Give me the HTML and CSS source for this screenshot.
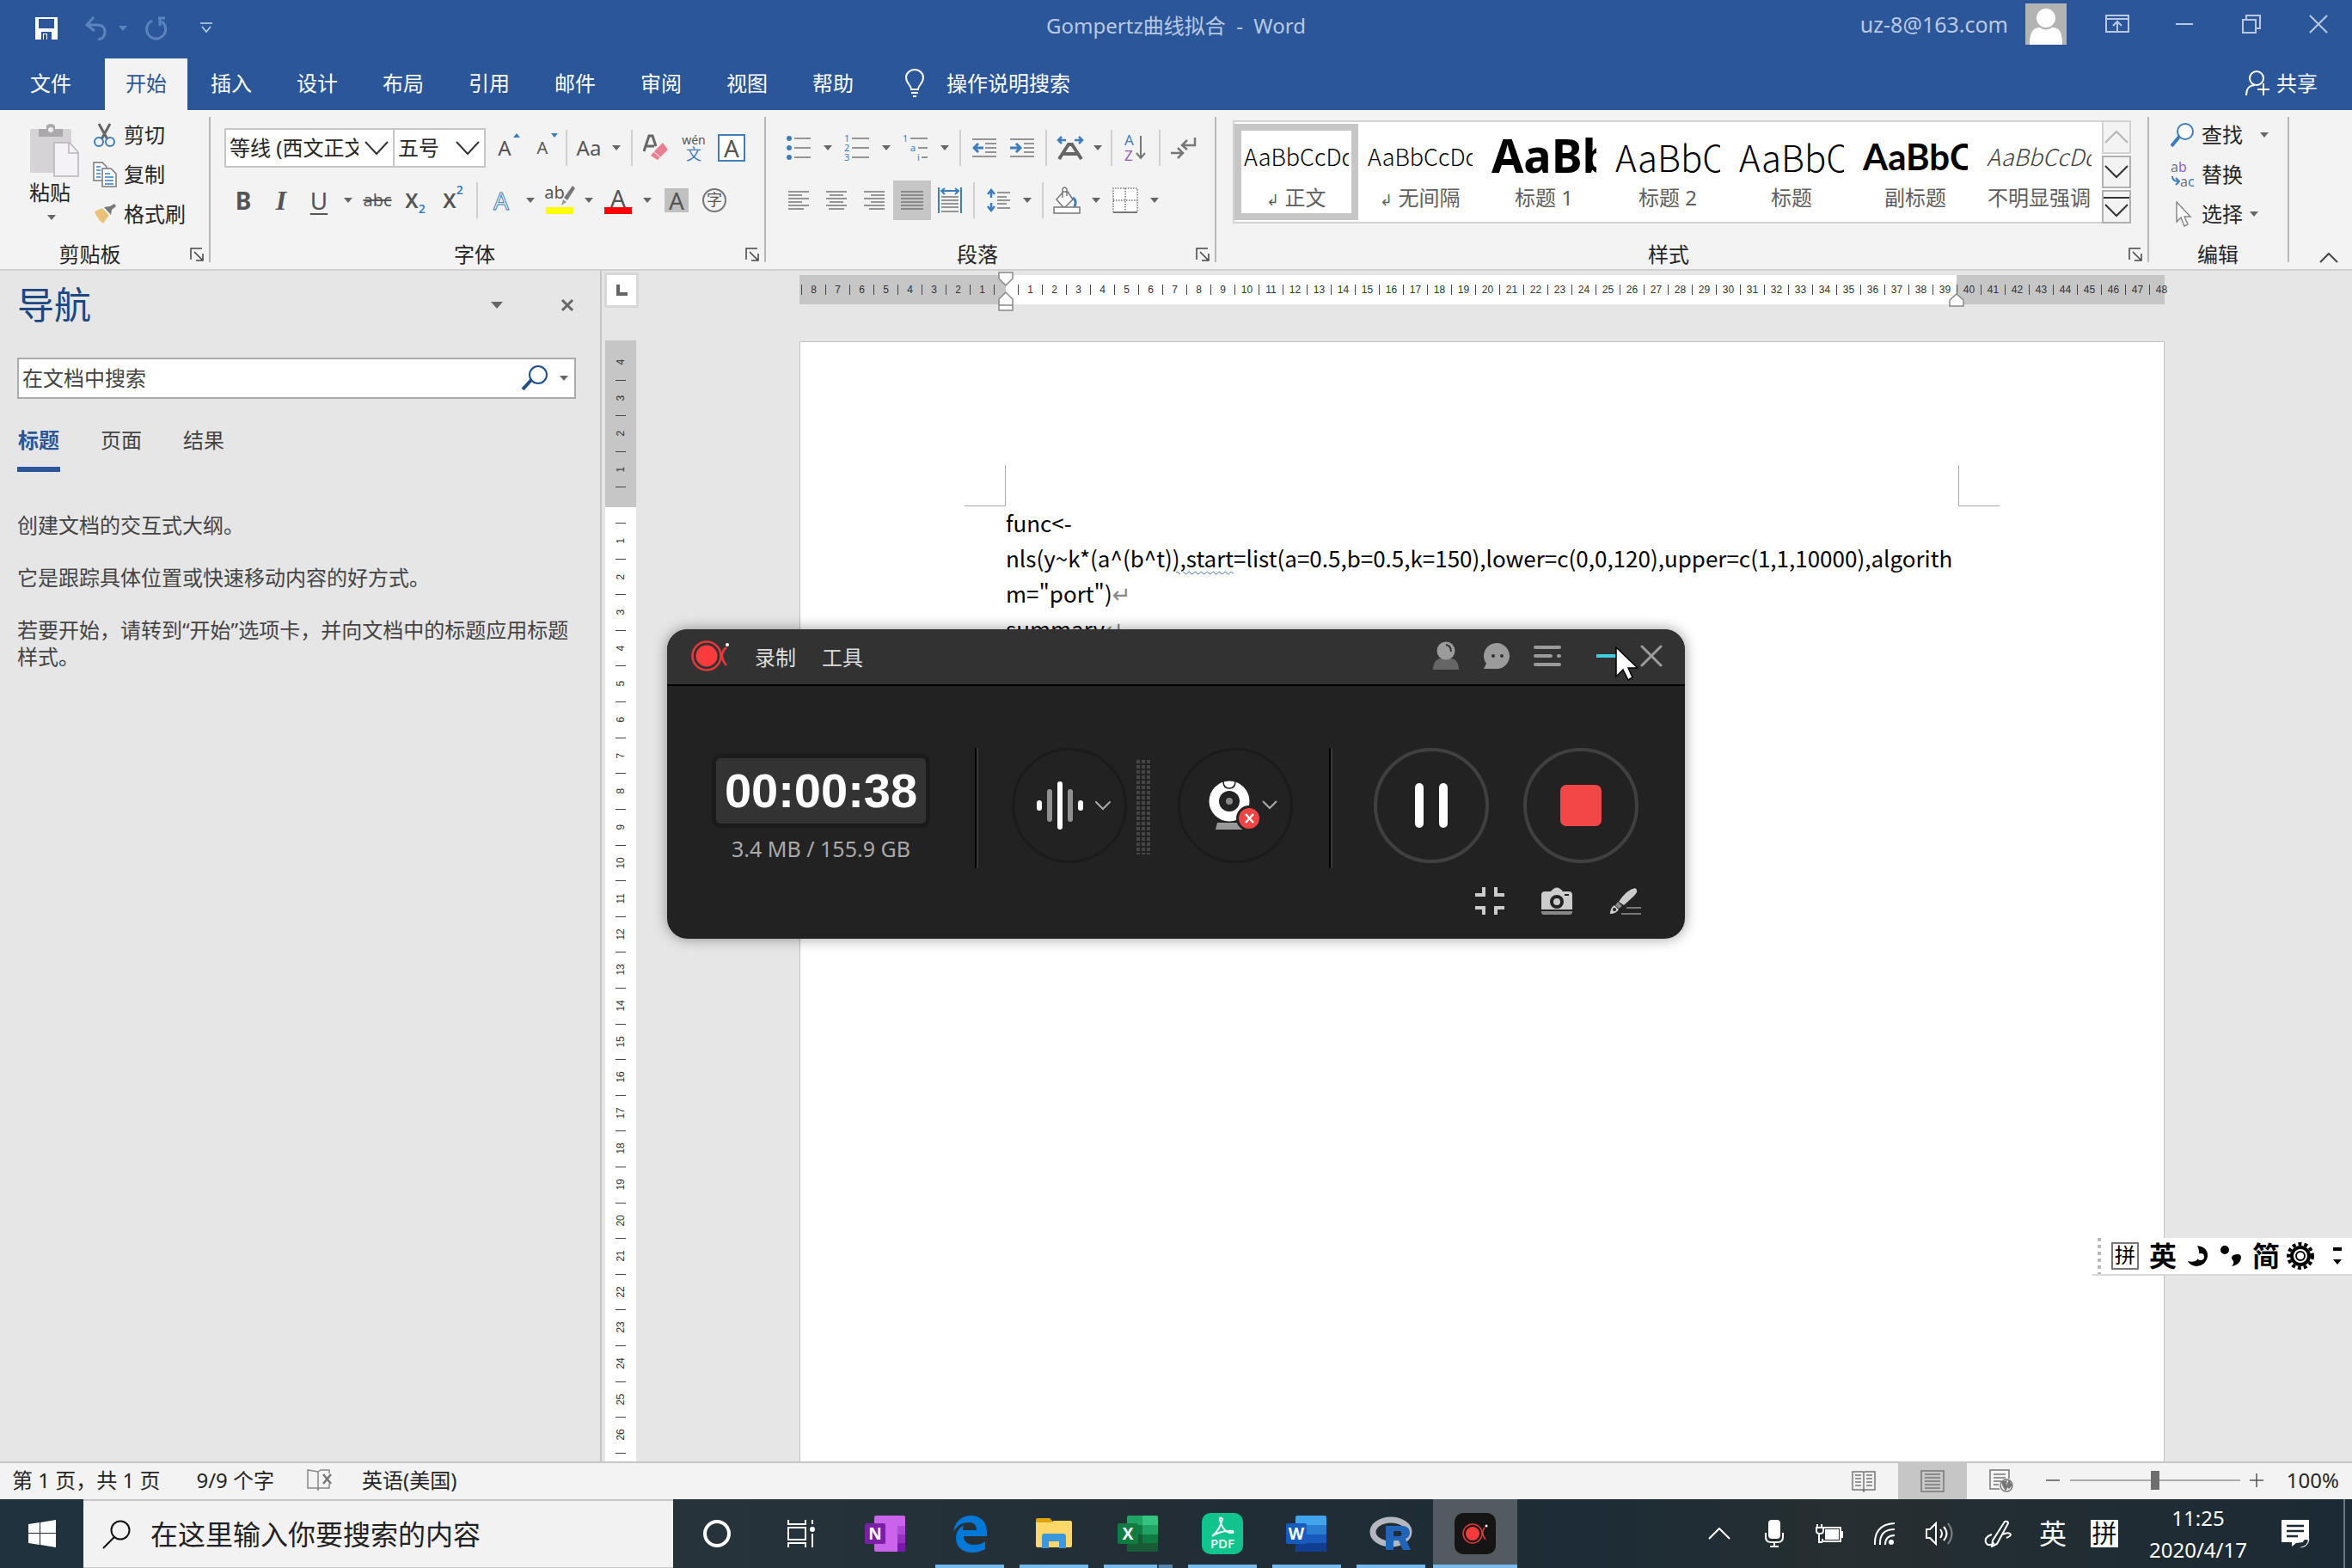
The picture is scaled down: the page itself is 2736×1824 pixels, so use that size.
FILE: index.html
```html
<!DOCTYPE html>
<html lang="zh-CN">
<head>
<meta charset="utf-8">
<title>Gompertz曲线拟合 - Word</title>
<link rel="stylesheet" href="styles.css">
</head>
<body>
<header class="titlebar">
  <div class="quick">
    <button class="quick-btn" aria-label="保存"><svg width="26" height="26" viewBox="0 0 26 26"><path d="M0 0h26v26H0z" fill="#fff"/><path d="M4 2h18v11H4z" fill="#2b579a"/><path d="M7 17h12v9H7z" fill="#2b579a"/><path d="M9 19h5v7H9z" fill="#fff"/><path d="M10 20h3v6h-3z" fill="#2b579a"/></svg></button>
    <button class="quick-btn undo" aria-label="撤消"><svg width="28" height="28" viewBox="0 0 28 28" fill="none" stroke="#5c83bd" stroke-width="3"><path d="M11 1L3 10l9 7M4 10h11q9 0 9 8t-8 9"/></svg></button>
    <span class="caret dim"></span>
    <button class="quick-btn" aria-label="重复"><svg width="28" height="28" viewBox="0 0 28 28" fill="none" stroke="#5c83bd" stroke-width="3"><path d="M9 5a11 11 0 1 0 11 1M16 2h8M18 2v9"/></svg></button>
    <button class="quick-btn customize" aria-label="自定义快速访问工具栏"><svg width="16" height="14" viewBox="0 0 16 14" fill="none" stroke="#c5d3e8" stroke-width="1.5"><path d="M1 1h14M3 5l5 6 5-6"/></svg></button>
  </div>
  <div class="doc-title">Gompertz曲线拟合&nbsp; -&nbsp; Word</div>
  <div class="account">
    <span class="email">uz-8@163.com</span>
    <svg class="avatar" width="48" height="48" viewBox="0 0 48 48"><path d="M0 0h48v48H0z" fill="#b3b3b3"/><circle cx="24" cy="17" r="11" fill="#fff"/><path d="M5 48c0-16 5-20 12-20q7 5 14 0c8 0 12 4 12 20z" fill="#fff"/></svg>
    <button class="win-btn" aria-label="功能区显示选项"><svg width="28" height="22" viewBox="0 0 28 22" fill="none" stroke="#b9c9e2" stroke-width="2"><path d="M1 1h26v19H1zM1 5h26M14 19V9M9 13l5-5 5 5"/></svg></button>
    <button class="win-btn" aria-label="最小化"><svg width="22" height="22" viewBox="0 0 22 22" stroke="#b9c9e2" stroke-width="2"><path d="M1 11h20"/></svg></button>
    <button class="win-btn" aria-label="还原"><svg width="22" height="22" viewBox="0 0 22 22" fill="none" stroke="#b9c9e2" stroke-width="2"><path d="M1 6h15v15H1zM5 6V1h16v15h-5"/></svg></button>
    <button class="win-btn" aria-label="关闭"><svg width="22" height="22" viewBox="0 0 22 22" stroke="#b9c9e2" stroke-width="2"><path d="M1 1l20 20M21 1L1 21"/></svg></button>
  </div>
</header>
<nav class="tabs">
  <button class="tab file">文件</button>
  <button class="tab active">开始</button>
  <button class="tab">插入</button>
  <button class="tab">设计</button>
  <button class="tab">布局</button>
  <button class="tab">引用</button>
  <button class="tab">邮件</button>
  <button class="tab">审阅</button>
  <button class="tab">视图</button>
  <button class="tab">帮助</button>
  <button class="tell-me"><svg width="26" height="34" viewBox="0 0 26 34" fill="none" stroke="#fff" stroke-width="2"><path d="M9 24c0-5-6-7-6-14a10 9 0 0 1 20 0c0 7-6 9-6 14zM9 28h8M11 32h4"/></svg>操作说明搜索</button>
  <button class="share"><svg width="30" height="32" viewBox="0 0 30 32" fill="none" stroke="#fff" stroke-width="2"><circle cx="13" cy="10" r="8"/><path d="M1 30c0-8 4-12 10-12M21 16v14M14 23h14"/></svg>共享</button>
</nav>

<section class="ribbon">
  <div class="group clipboard">
    <div class="clip-body">
      <button class="paste"><svg width="58" height="62" viewBox="0 0 58 62"><rect x="1" y="6" width="48" height="51" rx="2" fill="#d5d3d5"/><path d="M11 6h9V2q5-4 10 0v4h9v9H11z" fill="#aaa"/><circle cx="25" cy="7" r="3" fill="#eee"/><path d="M29 22h18l10 11v28H29z" fill="#f5f2f7" stroke="#b8b4bb" stroke-width="1.5"/><path d="M46 22v12h11" fill="none" stroke="#b8b4bb" stroke-width="1.5"/></svg><span>粘贴</span><i class="caret"></i></button>
      <div class="stack">
        <button class="row-btn"><svg width="28" height="28" viewBox="0 0 28 28" fill="none" stroke="#666" stroke-width="3"><path d="M7 1l10 18M20 1L10 19"/><g stroke="#3e7dbb" stroke-width="2"><circle cx="7" cy="22" r="5"/><circle cx="20" cy="22" r="5"/></g></svg>剪切</button>
        <button class="row-btn"><svg width="28" height="30" viewBox="0 0 28 30" fill="#fff" stroke="#777" stroke-width="1.5"><path d="M1 1h10l5 5v16H1z"/><path d="M11 8h10l6 6v15H11z"/><path d="M4 6h5M4 10h5M4 14h5M4 18h5M14 14h6M14 18h10M14 22h10M14 26h10" stroke="#3e7dbb"/></svg>复制</button>
        <button class="row-btn"><svg width="28" height="24" viewBox="0 0 28 24"><path d="M2 9l9-4 8 8-7 10q-7-5-10-14z" fill="#ecc078"/><path d="M12 4l8 9" stroke="#fff" stroke-width="2"/><path d="M13 4l7-1 5-3 2 3-5 4-1 6z" fill="#777"/></svg>格式刷</button>
      </div>
    </div>
    <div class="group-foot"><span>剪贴板</span><button class="launcher" aria-label="剪贴板选项"><svg width="16" height="16" viewBox="0 0 16 16" fill="none" stroke="#444" stroke-width="1.5"><path d="M1 14V1h13M5 5l9 9M15 7v8H7"/></svg></button></div>
  </div>

  <div class="group font">
    <div class="tool-row">
      <label class="combo family"><select aria-label="字体"><option>等线 (西文正文)</option></select><svg width="30" height="18" viewBox="0 0 30 18" fill="none" stroke="#333" stroke-width="2"><path d="M2 2l13 14L28 2"/></svg></label>
      <label class="combo size"><select aria-label="字号"><option>五号</option></select><svg width="30" height="18" viewBox="0 0 30 18" fill="none" stroke="#333" stroke-width="2"><path d="M2 2l13 14L28 2"/></svg></label>
      <button class="tool">A<svg class="sup-mark" width="8" height="6" viewBox="0 0 8 6"><path d="M0 5l4-5 4 5z" fill="#3e7dbb"/></svg></button>
      <button class="tool small">A<svg class="sup-mark" width="8" height="6" viewBox="0 0 8 6"><path d="M0 0l4 5 4-5z" fill="#3e7dbb"/></svg></button>
      <i class="sep"></i>
      <button class="tool aa">Aa</button><button class="drop" aria-label="更改大小写选项"><i class="caret"></i></button>
      <i class="sep"></i>
      <button class="tool" aria-label="清除格式"><svg width="30" height="32" viewBox="0 0 30 32"><path d="M1 20L7 2h4l4 12M4 14h9" fill="none" stroke="#666" stroke-width="3"/><path d="M16 17l7-7 6 8-12 12-8-5z" fill="#e77f90"/><path d="M12 20l8 7" stroke="#fff"/></svg></button>
      <button class="tool phonetic"><span>wén</span><b>文</b></button>
      <button class="tool large"><span class="boxed">A</span></button>
    </div>
    <div class="tool-row">
      <button class="tool large bold">B</button>
      <button class="tool italic">I</button>
      <button class="tool large underline">U</button><button class="drop" aria-label="下划线选项"><i class="caret"></i></button>
      <button class="tool strike">abc</button>
      <button class="tool script">X<sub>2</sub></button>
      <button class="tool script">X<sup>2</sup></button>
      <i class="sep"></i>
      <button class="tool large effect">A</button><button class="drop" aria-label="文本效果选项"><i class="caret"></i></button>
      <button class="tool mark"><span>ab</span><svg width="16" height="24" viewBox="0 0 16 24"><path d="M13 0l3 3L7 17 3 14z" fill="#777"/><path d="M2 16l4 3-6 4z" fill="#999"/></svg></button><button class="drop" aria-label="突出显示选项"><i class="caret"></i></button>
      <button class="tool large color">A</button><button class="drop" aria-label="字体颜色选项"><i class="caret"></i></button>
      <button class="tool large"><span class="shaded">A</span></button>
      <button class="tool"><span class="circled">字</span></button>
    </div>
    <div class="group-foot"><span>字体</span><button class="launcher" aria-label="字体选项"><svg width="16" height="16" viewBox="0 0 16 16" fill="none" stroke="#444" stroke-width="1.5"><path d="M1 14V1h13M5 5l9 9M15 7v8H7"/></svg></button></div>
  </div>

  <div class="group paragraph">
    <div class="tool-row">
      <button class="tool" aria-label="项目符号"><svg width="28" height="28" viewBox="0 0 28 28"><g fill="#3e7dbb"><circle cx="3" cy="3" r="3"/><circle cx="3" cy="14" r="3"/><circle cx="3" cy="25" r="3"/></g><path d="M9 3h19M9 14h19M9 25h19" stroke="#777" stroke-width="1.5"/></svg></button><button class="drop" aria-label="项目符号选项"><i class="caret"></i></button>
      <button class="tool" aria-label="编号"><svg width="30" height="32" viewBox="0 0 30 32"><g fill="#3e7dbb" font-family="Noto Sans" font-size="11"><text x="0" y="9">1</text><text x="0" y="20">2</text><text x="0" y="31">3</text></g><path d="M9 5h20M9 16h20M9 27h20" stroke="#777" stroke-width="1.5"/></svg></button><button class="drop" aria-label="编号选项"><i class="caret"></i></button>
      <button class="tool" aria-label="多级列表"><svg width="30" height="32" viewBox="0 0 30 32"><g fill="#3e7dbb" font-family="Noto Sans" font-size="11"><text x="0" y="9">1</text><text x="9" y="20">a</text><text x="17" y="31">i</text></g><path d="M9 5h20M18 16h11M22 27h7" stroke="#777" stroke-width="1.5"/></svg></button><button class="drop" aria-label="多级列表选项"><i class="caret"></i></button>
      <i class="sep"></i>
      <button class="tool" aria-label="减少缩进量"><svg width="28" height="22" viewBox="0 0 28 22"><path d="M0 1h28M15 6h13M15 11h13M15 16h13M0 21h28" stroke="#777" stroke-width="1.5"/><path d="M13 11H2M7 6l-5 5 5 5" fill="none" stroke="#3e7dbb" stroke-width="3"/></svg></button>
      <button class="tool" aria-label="增加缩进量"><svg width="28" height="22" viewBox="0 0 28 22"><path d="M0 1h28M16 6h12M16 11h12M16 16h12M0 21h28" stroke="#777" stroke-width="1.5"/><path d="M0 11h12M7 6l5 5-5 5" fill="none" stroke="#3e7dbb" stroke-width="3"/></svg></button>
      <i class="sep"></i>
      <button class="tool" aria-label="中文版式"><svg width="32" height="28" viewBox="0 0 32 28" fill="none"><path d="M3 27L14 10h4l11 17M8 21h16" stroke="#666" stroke-width="4"/><path d="M11 5H2M6 1L2 5l4 4M21 5h9M26 1l4 4-4 4" stroke="#3e7dbb" stroke-width="2.500"/></svg></button><button class="drop narrow" aria-label="中文版式选项"><i class="caret"></i></button>
      <i class="sep"></i>
      <button class="tool" aria-label="排序"><svg width="26" height="32" viewBox="0 0 26 32"><g font-family="Noto Sans" font-size="17"><text x="0" y="13" fill="#3e7dbb">A</text><text x="0" y="31" fill="#8c5ab5">Z</text></g><path d="M19 2v26M14 22l5 6 5-6" fill="none" stroke="#777" stroke-width="2"/></svg></button>
      <i class="sep"></i>
      <button class="tool" aria-label="显示编辑标记"><svg width="30" height="26" viewBox="0 0 30 26" fill="none" stroke="#777" stroke-width="2.500"><path d="M28 1v9H14M19 4l-6 6 6 5M0 19h13M8 13l6 6-6 6"/></svg></button>
    </div>
    <div class="tool-row">
      <button class="tool" aria-label="左对齐"><svg width="26" height="22" viewBox="0 0 26 22" stroke="#777" stroke-width="1.500"><path d="M1 1h24M1 5h16M1 9h24M1 13h16M1 17h24M1 21h18"/></svg></button>
      <button class="tool" aria-label="居中"><svg width="26" height="22" viewBox="0 0 26 22" stroke="#777" stroke-width="1.500"><path d="M1 1h24M5 5h16M1 9h24M5 13h16M1 17h24M4 21h18"/></svg></button>
      <button class="tool" aria-label="右对齐"><svg width="26" height="22" viewBox="0 0 26 22" stroke="#777" stroke-width="1.500"><path d="M1 1h24M9 5h16M1 9h24M9 13h16M1 17h24M7 21h18"/></svg></button>
      <button class="tool pressed" aria-label="两端对齐"><svg width="28" height="22" viewBox="0 0 28 22" stroke="#777" stroke-width="1.500"><path d="M1 1h26M1 5h26M1 9h26M1 13h26M1 17h26M1 21h26"/></svg></button>
      <button class="tool" aria-label="分散对齐"><svg width="28" height="30" viewBox="0 0 28 30" fill="none"><path d="M1 0v30M27 0v30M4 4h20M8 1L4 4l4 4M20 1l4 3-4 4" stroke="#3e7dbb" stroke-width="2"/><path d="M4 11h20M4 15h20M4 19h20M4 23h20M4 28h20" stroke="#777" stroke-width="1.500"/></svg></button>
      <i class="sep"></i>
      <button class="tool" aria-label="行距"><svg width="28" height="28" viewBox="0 0 28 28" fill="none"><path d="M6 2v9M2 7l4-5 4 5M6 17v9M2 21l4 5 4-5" stroke="#3e7dbb" stroke-width="2.500"/><path d="M13 5h15M13 10h11M13 14h15M13 18h11M13 23h15" stroke="#777" stroke-width="1.500"/></svg></button><button class="drop" aria-label="行距选项"><i class="caret"></i></button>
      <i class="sep"></i>
      <button class="tool" aria-label="底纹"><svg width="32" height="32" viewBox="0 0 32 32" fill="#fff" stroke="#777" stroke-width="1.500"><path d="M12 24L4 15 12 6h5l6 9-9 9zM11 13V3q2-4 5 0v8"/><path d="M23 13q5 3 2 11" fill="none" stroke="#3e7dbb" stroke-width="3"/><path d="M1 24h30v7H1z"/></svg></button><button class="drop" aria-label="底纹选项"><i class="caret"></i></button>
      <button class="tool" aria-label="边框"><svg width="30" height="30" viewBox="0 0 30 30" fill="#fff" stroke="#777"><path d="M1 29V1h28v28M15 1v28M1 15h28" stroke-width="1.500" stroke-dasharray="1.500 1.500"/><path d="M1 29h28" stroke-width="2"/></svg></button><button class="drop" aria-label="边框选项"><i class="caret"></i></button>
    </div>
    <div class="group-foot"><span>段落</span><button class="launcher" aria-label="段落选项"><svg width="16" height="16" viewBox="0 0 16 16" fill="none" stroke="#444" stroke-width="1.5"><path d="M1 14V1h13M5 5l9 9M15 7v8H7"/></svg></button></div>
  </div>

  <div class="group styles">
    <div class="gallery">
      <div class="gallery-items">
        <button class="style chosen"><span class="preview">AaBbCcDd</span><span class="name"><small>↲</small> 正文</span></button>
        <button class="style"><span class="preview">AaBbCcDd</span><span class="name"><small>↲</small> 无间隔</span></button>
        <button class="style"><span class="preview h1">AaBb</span><span class="name">标题 1</span></button>
        <button class="style"><span class="preview h2">AaBbC</span><span class="name">标题 2</span></button>
        <button class="style"><span class="preview h2">AaBbC</span><span class="name">标题</span></button>
        <button class="style"><span class="preview h2 strong">AaBbC</span><span class="name">副标题</span></button>
        <button class="style"><span class="preview em">AaBbCcDd</span><span class="name">不明显强调</span></button>
      </div>
      <div class="gallery-nav">
        <button class="off" aria-label="上一行"><svg width="30" height="16" viewBox="0 0 30 16" fill="none" stroke="#b5b5b5" stroke-width="2"><path d="M2 15L15 2l13 13"/></svg></button>
        <button aria-label="下一行"><svg width="30" height="16" viewBox="0 0 30 16" fill="none" stroke="#333" stroke-width="2"><path d="M2 1l13 13L28 1"/></svg></button>
        <button aria-label="更多样式"><svg width="30" height="24" viewBox="0 0 30 24" fill="none" stroke="#333" stroke-width="2"><path d="M0 1h30M2 9l13 13L28 9"/></svg></button>
      </div>
    </div>
    <div class="group-foot"><span>样式</span><button class="launcher" aria-label="样式选项"><svg width="16" height="16" viewBox="0 0 16 16" fill="none" stroke="#444" stroke-width="1.5"><path d="M1 14V1h13M5 5l9 9M15 7v8H7"/></svg></button></div>
  </div>

  <div class="group editing">
    <div class="stack">
      <button class="row-btn"><svg width="28" height="28" viewBox="0 0 28 28" fill="#fff" stroke="#3e7dbb"><path d="M1 27l9-11" stroke-width="4"/><circle cx="17" cy="10" r="9" stroke-width="2"/></svg>查找<i class="caret far"></i></button>
      <button class="row-btn"><svg width="28" height="30" viewBox="0 0 28 30"><g font-family="Noto Sans" font-size="16"><text x="0" y="12" fill="#777">a</text><text x="9" y="12" fill="#9a5fc0">b</text><text x="11" y="29" fill="#777">a</text><text x="20" y="29" fill="#3e7dbb">c</text></g><path d="M2 17q0 6 7 6M6 19l4 4-4 4" fill="none" stroke="#3e7dbb" stroke-width="2"/></svg>替换</button>
      <button class="row-btn"><svg width="28" height="30" viewBox="0 0 28 30"><path d="M7 1v23l5-5 4 10 4-2-4-9h7z" fill="#fff" stroke="#888" stroke-width="1.500"/></svg>选择<i class="caret"></i></button>
    </div>
    <div class="group-foot"><span>编辑</span></div>
  </div>
  <button class="collapse" aria-label="折叠功能区"><svg width="22" height="12" viewBox="0 0 22 12" fill="none" stroke="#444" stroke-width="2"><path d="M1 11L11 1l10 10"/></svg></button>
</section>

<main class="workspace">
  <aside class="nav-pane">
    <div class="pane-head"><h2>导航</h2><button class="pane-menu" aria-label="任务窗格选项"><i class="caret big"></i></button><button class="pane-close" aria-label="关闭"><svg width="16" height="16" viewBox="0 0 16 16" stroke="#666" stroke-width="3"><path d="M2 2l12 12M14 2L2 14"/></svg></button></div>
    <div class="search"><input type="text" aria-label="搜索文档" placeholder="在文档中搜索"><svg width="30" height="30" viewBox="0 0 30 30" fill="none" stroke="#1f4e8c"><path d="M1 28l10-11" stroke-width="4"/><circle cx="19" cy="11" r="10" stroke-width="2"/></svg><i class="caret"></i></div>
    <div class="pane-tabs"><button class="on">标题</button><button>页面</button><button>结果</button></div>
    <p>创建文档的交互式大纲。</p>
    <p>它是跟踪具体位置或快速移动内容的好方式。</p>
    <p>若要开始，请转到“开始”选项卡，并向文档中的标题应用标题样式。</p>
  </aside>
  <div class="left-rule">
    <button class="tab-stop" aria-label="左对齐式制表符"><svg width="14" height="14" viewBox="0 0 14 14" fill="none" stroke="#666" stroke-width="4"><path d="M3 0v11h11"/></svg></button>
    <div class="v-ruler" id="v-ruler"></div>
  </div>
  <div class="canvas">
    <div class="h-ruler" id="h-ruler">
      <svg class="marker first" width="18" height="46" viewBox="0 0 18 46" fill="#fff" stroke="#888" stroke-width="1.500"><path d="M1 1h16v7l-8 8-8-8zM1 39v-7l8-8 8 8v7zM1 39h16v6H1z"/></svg>
      <svg class="marker right" width="18" height="16" viewBox="0 0 18 16" fill="#fff" stroke="#888" stroke-width="1.500"><path d="M1 15V8l8-7 8 7v7z"/></svg>
    </div>
    <article class="page">
      <div class="crops"><i class="crop-l"></i><i class="crop-r"></i></div>
      <p>func&lt;-<br>nls(y~k*(a^(b^t)<span class="grammar">),start</span>=list(a=0.5,b=0.5,k=150),lower=c(0,0,120),upper=c(1,1,10000),algorith<br>m="port")<span class="ret">↵</span></p>
      <p>summary<span class="ret">↵</span></p>
    </article>
  </div>
</main>

<footer class="status">
  <span class="st-page">第 1 页，共 1 页</span>
  <span class="st-count">9/9 个字</span>
  <svg class="st-book" width="30" height="26" viewBox="0 0 30 26" fill="none" stroke="#888" stroke-width="1.500"><path d="M13 3L1 1v21h11l1 2 1-2h12v-5M13 3v19M13 3l3-2h10v4"/><path d="M19 6l9 11M28 6l-9 11" stroke="#777" stroke-width="2.500"/></svg>
  <span>英语(美国)</span>
  <div class="views">
    <button aria-label="阅读视图"><svg width="28" height="26" viewBox="0 0 28 26" fill="none" stroke="#777" stroke-width="1.500"><path d="M1 2h12l1 1 1-1h12v21H15l-1 2-1-2H1zM14 3v21M4 6h7M4 10h7M4 14h7M4 18h7M17 6h7M17 10h7M17 14h7M17 18h7"/></svg></button>
    <button class="on" aria-label="页面视图"><svg width="28" height="26" viewBox="0 0 28 26" fill="none" stroke="#777" stroke-width="1.500"><path d="M1 1h26v24H1zM5 5h18M5 9h18M5 13h18M5 17h18M5 21h18"/></svg></button>
    <button aria-label="Web 版式视图"><svg width="28" height="28" viewBox="0 0 28 28" fill="none" stroke="#777" stroke-width="1.500"><path d="M12 23H1V1h22v10M5 6h14M5 10h14M5 14h9M5 18h6"/><circle cx="20" cy="19" r="7" fill="#f3f3f3"/><path d="M15 15l5-1-1 4 2 3-2 3-3-5zM23 14l3 5-3 3-2-4z" fill="#777"/></svg></button>
  </div>
  <button class="zoom-btn" aria-label="缩小"><svg width="16" height="16" viewBox="0 0 16 16" stroke="#555" stroke-width="1.500"><path d="M0 8h16"/></svg></button>
  <input class="zoom" type="range" min="0" max="100" value="50" aria-label="显示比例">
  <button class="zoom-btn" aria-label="放大"><svg width="16" height="16" viewBox="0 0 16 16" stroke="#555" stroke-width="1.500"><path d="M0 8h16M8 0v16"/></svg></button>
  <span class="st-zoom">100%</span>
</footer>

<div class="taskbar">
  <button class="start" aria-label="开始"><svg width="32" height="32" viewBox="0 0 32 32" fill="#fff"><path d="M0 5l13-2v12H0zM14 3l18-3v15H14zM0 16h13v13L0 27zM14 16h18v16l-18-3z"/></svg></button>
  <div class="task-search"><svg width="34" height="34" viewBox="0 0 34 34" fill="none" stroke="#111" stroke-width="2"><circle cx="21" cy="12" r="10.500"/><path d="M14 20L1 33"/></svg><input type="text" aria-label="搜索" placeholder="在这里输入你要搜索的内容"></div>
  <div class="apps">
    <button class="app" aria-label="Cortana"><svg width="34" height="34" viewBox="0 0 34 34" fill="none"><circle cx="17" cy="17" r="14" stroke="#fff" stroke-width="4"/></svg></button>
    <button class="app" aria-label="任务视图"><svg width="34" height="34" viewBox="0 0 34 34" fill="none" stroke="#fff" stroke-width="2"><path d="M2 1v5h20V1M2 10h20v14H2zM2 33v-5h20v5M30 1v5M30 17v16"/><circle cx="30" cy="12" r="2" fill="#fff"/></svg></button>
    <button class="app" aria-label="OneNote"><svg width="48" height="44" viewBox="0 0 48 44"><rect x="11" y="1" width="36" height="42" rx="2" fill="#ca64ea"/><path d="M38 13h9v10h-9z" fill="#ae4bd5"/><path d="M38 23h9v10h-9z" fill="#9332bf"/><path d="M38 33h9v8q0 2-2 2h-7z" fill="#7719aa"/><rect x="0" y="10" width="24" height="24" rx="2" fill="#7a1fa8"/><text x="12" y="29" text-anchor="middle" class="tile-letter">N</text></svg></button>
    <button class="app open" aria-label="Edge"><svg width="42" height="44" viewBox="0 0 42 44"><path d="M2 20C4 6 14 1 22 1c13 0 19 9 19 19v5H14c0 7 6 10 12 10 5 0 9-1 13-4v9c-4 2-9 4-15 4C12 44 5 37 5 27 5 19 10 14 15 12c-2 2-2 4-2 6h16c0-6-3-9-9-9C12 9 6 13 2 20z" fill="#0078d7"/></svg></button>
    <button class="app open" aria-label="文件资源管理器"><svg width="44" height="38" viewBox="0 0 44 38"><path d="M1 3q0-2 2-2h14l4 4v6H1z" fill="#e0a30c"/><path d="M1 6h18l3-2h19q2 0 2 2v27q0 2-2 2H3q-2 0-2-2z" fill="#ffd868"/><path d="M8 36V22q0-3 3-3h22q3 0 3 3v14h-8v-8H16v8z" fill="#3c97dc"/></svg></button>
    <button class="app open multi" aria-label="Excel"><svg width="48" height="44" viewBox="0 0 48 44"><rect x="11" y="1" width="36" height="42" rx="2" fill="#21a366"/><path d="M29 1h16q2 0 2 2v9H29z" fill="#33c481"/><path d="M11 12h18v11H11z" fill="#107c41"/><path d="M29 23h18v10H29z" fill="#107c41"/><path d="M11 23h18v20H13q-2 0-2-2zM29 33h18v8q0 2-2 2H29z" fill="#185c37"/><rect x="0" y="10" width="24" height="24" rx="2" fill="#107c41"/><text x="12" y="29" text-anchor="middle" class="tile-letter">X</text></svg></button>
    <button class="app open" aria-label="PDF"><svg width="48" height="48" viewBox="0 0 48 48"><rect width="48" height="48" rx="10" fill="#0fc48d"/><path d="M12 27q9-7 12-20-5-4-2 4 4 13 14 12 2-3-5-2-10 0-19 6" fill="none" stroke="#fff" stroke-width="2"/><text x="24" y="41" text-anchor="middle" class="tile-pdf">PDF</text></svg></button>
    <button class="app open" aria-label="Word"><svg width="48" height="44" viewBox="0 0 48 44"><rect x="11" y="1" width="36" height="42" rx="2" fill="#41a5ee"/><path d="M11 12h36v11H11z" fill="#2b7cd3"/><path d="M11 23h36v10H11z" fill="#185abd"/><path d="M11 33h36v8q0 2-2 2H13q-2 0-2-2z" fill="#103f91"/><rect x="0" y="10" width="24" height="24" rx="2" fill="#185abd"/><text x="12" y="29" text-anchor="middle" class="tile-letter">W</text></svg></button>
    <button class="app open" aria-label="R"><svg width="50" height="40" viewBox="0 0 50 40"><ellipse cx="25" cy="18" rx="21" ry="14" fill="none" stroke="#b4b7bd" stroke-width="7"/><path d="M19 11h20q8 1 8 8 0 5-5 7l6 13h-9l-5-11h-6v11h-9zm9 6v6h8q3-3 0-6z" fill="#2065b8" fill-rule="evenodd"/></svg></button>
    <button class="app current" aria-label="录屏"><svg width="48" height="48" viewBox="0 0 48 48"><rect width="48" height="48" rx="10" fill="#151515"/><circle cx="21" cy="24" r="11" fill="none" stroke="#e9383b" stroke-width="1.500"/><circle cx="21" cy="24" r="8" fill="#fb3a3d"/><path d="M35 17q-5 6 1 14" fill="none" stroke="#e9383b" stroke-width="1.500"/><circle cx="37" cy="15" r="1.500" fill="#fff"/></svg></button>
  </div>
  <div class="tray">
    <svg width="26" height="14" viewBox="0 0 26 14" fill="none" stroke="#fff" stroke-width="2"><path d="M1 13L13 1l12 12"/></svg>
    <svg width="22" height="32" viewBox="0 0 22 32" fill="none" stroke="#fff" stroke-width="2"><rect x="4" y="0" width="14" height="22" rx="4" fill="#fff" stroke="none"/><path d="M1 15v5q0 6 6 6h8q6 0 6-6v-5M11 26v5M6 31h10"/></svg>
    <svg width="32" height="24" viewBox="0 0 32 24" fill="none" stroke="#fff" stroke-width="2"><path d="M10 5h19v16H8v-3M31 9v8"/><path d="M12 8h14v10H12z" fill="#fff"/><path d="M2 1v4M7 1v4M0 5h9v4q0 3-4 3t-4-3V5M4 12v10h4"/></svg>
    <svg width="26" height="28" viewBox="0 0 26 28" fill="none" stroke="#fff" stroke-width="2"><path d="M2 27Q1 3 25 2M8 27Q7 9 25 9M14 27q0-11 11-11"/><circle cx="21" cy="24" r="3" fill="#fff" stroke="none"/></svg>
    <svg width="32" height="28" viewBox="0 0 32 28" fill="none" stroke="#fff" stroke-width="2"><path d="M1 9h4l7-7v24l-7-7H1zM17 9q4 5 0 10M21 6q7 8 0 16"/><path d="M26 2q9 12 0 24" stroke="#7b868c"/></svg>
    <svg width="32" height="32" viewBox="0 0 32 32" fill="none" stroke="#fff" stroke-width="2"><path d="M24 2q4-1 4 2L15 28l-6 3 1-7zM9 17q-9 3-7 9t10 1M22 17q5-3 8-1t-4 5"/></svg>
    <span class="tray-lang">英</span>
    <span class="tray-ime">拼</span>
  </div>
  <time class="clock">11:25<br>2020/4/17</time>
  <button class="notify" aria-label="通知"><svg width="34" height="34" viewBox="0 0 34 34"><path d="M1 1h32v24q-6-3-7 2l-8 1-5 4v-5H1z" fill="#fff"/><path d="M7 8h20M7 14h20M7 20h13" stroke="#1d2b35" stroke-width="2.500"/><path d="M31 19q4 12-9 14 7 1 10-5t-1-9z" fill="#fff"/></svg></button>
</div>

<section class="recorder" aria-label="录屏工具">
  <header class="rec-head">
    <svg width="44" height="38" viewBox="0 0 44 38" fill="none"><circle cx="18" cy="19" r="16.500" stroke="#e9383b" stroke-width="2.500"/><circle cx="18" cy="19" r="12.500" fill="#fb3a3d"/><path d="M41 9q-10 9 0 21" stroke="#e9383b" stroke-width="2.500"/><circle cx="42" cy="6" r="2" fill="#fff"/></svg>
    <button class="rec-menu">录制</button><button class="rec-menu">工具</button>
    <div class="rec-tools">
      <button aria-label="账户"><svg width="32" height="34" viewBox="0 0 32 34"><path d="M1 33c0-8 4-13 9-13h12c5 0 9 5 9 13z" fill="#666"/><circle cx="16" cy="11" r="10.500" fill="#9b9b9b" /><path d="M16 4q6 1 6 8" fill="none" stroke="#333" stroke-width="2"/></svg></button>
      <button aria-label="反馈"><svg width="32" height="32" viewBox="0 0 32 32"><path d="M1 31l3-6A15 15 0 1 1 17 31z" fill="#9b9b9b"/><circle cx="12" cy="16" r="2" fill="#333"/><circle cx="22" cy="16" r="2" fill="#333"/></svg></button>
      <button aria-label="菜单"><svg width="32" height="26" viewBox="0 0 32 26" stroke="#9b9b9b" stroke-width="4" stroke-linecap="round"><path d="M2 3h28M2 13h18M29 13h1M2 23h28"/></svg></button>
      <button class="rec-min" aria-label="最小化"><svg width="36" height="26" viewBox="0 0 36 26"><path d="M0 11h32v4H0z" fill="#3fcde2"/></svg></button>
      <button aria-label="关闭"><svg width="26" height="26" viewBox="0 0 26 26" stroke="#9b9b9b" stroke-width="3" stroke-linecap="round"><path d="M2 2l22 22M24 2L2 24"/></svg></button>
    </div>
  </header>
  <div class="rec-body">
    <div class="rec-time"><output class="timer">00:00:38</output><span>3.4 MB / 155.9 GB</span></div>
    <i class="rec-sep"></i>
    <div class="rec-sources">
      <button class="dial dark" aria-label="音频"><svg width="90" height="56" viewBox="0 0 90 56" stroke-linecap="round" fill="none"><path d="M4 25v6M52 25v6M28 3v50" stroke="#fff" stroke-width="6"/><path d="M16 12v32M40 12v32" stroke="#909090" stroke-width="6"/><path d="M70 24l8 8 8-8" stroke="#aaa" stroke-width="2"/></svg></button>
      <i class="meter"></i>
      <button class="dial dark cam" aria-label="摄像头"><svg width="84" height="60" viewBox="0 0 84 60"><path d="M12 50h30v8H10z" fill="#999"/><circle cx="26" cy="25" r="23.500" fill="#fff"/><circle cx="26" cy="25" r="12" fill="#222"/><circle cx="26" cy="25" r="4" fill="#888"/><path d="M19 2q0 8 7 8t7-8" fill="none" stroke="#222" stroke-width="1.500"/><circle cx="49" cy="45" r="15" fill="#222"/><circle cx="49" cy="45" r="12" fill="#ee4444"/><path d="M45 40l9 10M54 40l-9 10" stroke="#fff" stroke-width="2.500"/><path d="M65 25l8 8 8-8" stroke="#aaa" stroke-width="2" fill="none"/></svg></button>
    </div>
    <i class="rec-sep"></i>
    <div class="rec-main">
      <div class="rec-dials">
      <button class="dial" aria-label="暂停"><svg width="40" height="54" viewBox="0 0 40 54"><rect x="1" y="1" width="10" height="52" rx="5" fill="#fff"/><rect x="29" y="1" width="10" height="52" rx="5" fill="#fff"/></svg></button>
      <button class="dial" aria-label="停止"><svg width="48" height="48" viewBox="0 0 48 48"><rect width="48" height="48" rx="7" fill="#f34747"/></svg></button>
      </div>
      <div class="rec-extra">
        <button aria-label="收起"><svg width="36" height="32" viewBox="0 0 36 32" fill="none" stroke="#ccc" stroke-width="4"><path d="M1 9h10V0M35 9H25V0M1 24h10v8M35 24H25v8"/></svg></button>
        <button aria-label="截图"><svg width="36" height="32" viewBox="0 0 36 32"><path d="M0 9q0-4 4-4h7q7-9 14 0h7q4 0 4 4v17H0z" fill="#ccc"/><circle cx="18" cy="17" r="8" fill="#222"/><circle cx="18" cy="17" r="4" fill="#ccc"/><path d="M27 9h5" stroke="#222" stroke-width="2"/><path d="M0 28h36v1q0 3-3 3H3q-3 0-3-3z" fill="#888"/></svg></button>
        <button aria-label="标注"><svg width="40" height="32" viewBox="0 0 40 32"><path d="M31 1q5 3-1 9L18 21l-6-4Q21 3 31 1z" fill="#ccc"/><path d="M11 17l5 5-4 3-4-4z" fill="#888"/><path d="M7 21l5 5q-3 5-10 5 0-7 5-10z" fill="#ccc"/><circle cx="7" cy="26" r="2" fill="#222"/><path d="M21 24h17M15 31h23" stroke="#777" stroke-width="2"/></svg></button>
      </div>
    </div>
  </div>
  <svg class="cursor" width="28" height="40" viewBox="0 0 28 40"><path d="M2 1v34l8-8 6 12 5-3-5-11h11z" fill="#fff" stroke="#000" stroke-width="1.500"/></svg>
</section>

<div class="ime-bar">
  <i class="grip"></i>
  <span class="ime-box">拼</span>
  <b>英</b>
  <svg width="26" height="24" viewBox="0 0 26 24"><path d="M12 0q13 2 12 13-2 10-13 11-8-1-10-6 11 3 13-6 1-6-2-12z"/><circle cx="16" cy="13" r="4" fill="#fff"/></svg>
  <svg width="26" height="24" viewBox="0 0 26 24"><circle cx="6" cy="5" r="5"/><path d="M16 11q9-3 9 3-1 8-11 10 3-3 2-6-4-4 0-7z"/></svg>
  <b>简</b>
  <svg width="32" height="32" viewBox="0 0 32 32" fill="none" stroke="#000"><circle cx="16" cy="16" r="10" stroke-width="4"/><circle cx="16" cy="16" r="14" stroke-width="4" stroke-dasharray="4 3"/><circle cx="16" cy="16" r="5" stroke-width="2"/></svg>
  <svg class="ime-more" width="10" height="20" viewBox="0 0 10 20"><path d="M0 0h10v4H0zM0 14h10l-5 6z"/></svg>
</div>
<script src="rulers.js"></script>
</body>
</html>
```
FILE: styles.css
```css
* { box-sizing: border-box; }
body {
  margin: 0;
  min-height: 100vh;
  display: flex;
  flex-direction: column;
  position: relative;
  overflow-x: hidden;
  font-family: "Noto Sans", "Noto Sans CJK SC", sans-serif;
  font-size: 24px;
  line-height: 32px;
  color: #262626;
  background: #e6e6e6;
}
button, input, select { font: inherit; color: inherit; background: none; border: 0; padding: 0; margin: 0; }
button { display: flex; align-items: center; justify-content: center; white-space: nowrap; }
svg { display: block; flex: none; }
i { font-style: normal; }
p, h2 { margin: 0; font-weight: 400; }

.caret { width: 0; height: 0; flex: none; border: 5px solid transparent; border-top: 6px solid #666; border-bottom: 0; }
.caret.dim { border-top-color: #5c83bd; }
.caret.big { border-width: 8px 7px 0; }

/* title bar */
.titlebar { height: 68px; display: grid; grid-template-columns: 1fr auto 1fr; background: #2b579a; color: #b9c9e2; }
.quick { display: flex; align-items: center; height: 66px; padding-left: 40px; }
.quick-btn { width: 28px; }
.undo { margin-left: 30px; }
.undo + .caret { margin: 0 20px 0 12px; }
.customize { margin-left: 30px; }
.doc-title { padding-top: 14px; white-space: nowrap; }
.account { display: flex; justify-content: flex-end; align-items: center; height: 55px; font-size: 25px; }
.avatar { margin-left: 20px; margin-right: 20px; }
.win-btn { width: 78px; height: 55px; }

.tabs { height: 60px; display: flex; background: #2b579a; color: #fff; }
.tabs button { padding-bottom: 2px; }
.tab { width: 100px; }
.tab.file { width: 118px; margin-right: 4px; }
.tab.active { width: 96px; margin-right: 1px; background: #f3f3f3; color: #2b579a; }
.tell-me { margin-left: 32px; gap: 24px; }
.share { margin-left: auto; margin-right: 40px; gap: 6px; }

/* ribbon */
.ribbon { display: flex; height: 187px; background: #f3f3f3; border-bottom: 2px solid #d0d0d0; }
.group { display: flex; flex-direction: column; position: relative; border-right: 0; padding-right: 2px; }
.group::after { content: ""; position: absolute; right: 0; top: 8px; bottom: 8px; width: 2px; background: #b8b8b8; }
.group-foot { margin-top: auto; height: 34px; display: flex; align-items: center; padding-right: 6px; }
.group-foot span { flex: 1; text-align: center; }
.launcher { width: 16px; height: 16px; }
.clipboard { width: 245px; }
.clip-body { display: flex; padding-top: 6px; padding-left: 30px; }
.clipboard .group-foot span { padding-right: 12px; }
.paste { flex-direction: column; width: 66px; justify-content: flex-start; padding-top: 10px; }
.paste span { margin-top: 2px; margin-right: 10px; }
.paste .caret { margin-top: 10px; margin-right: 6px; }
.stack { display: flex; flex-direction: column; }
.row-btn { height: 46px; gap: 8px; justify-content: flex-start; }
.clipboard .row-btn { padding-left: 12px; }
.font { width: 646px; padding-left: 16px; padding-top: 21px; }
.paragraph { width: 524px; padding-left: 16px; padding-top: 21px; }
.font .group-foot span, .paragraph .group-foot span { padding-right: 24px; }
.tool-row { display: flex; height: 46px; align-items: center; margin-bottom: 15px; }
.tool-row + .tool-row { margin-bottom: 0; }
.combo { display: flex; align-items: center; height: 46px; border: 2px solid #c6c6c6; background: #fff; padding: 0 4px; }
.combo select { appearance: none; flex: 1; width: 0; overflow: hidden; margin-right: 6px; }
.combo.family { width: 198px; }
.combo.size { width: 108px; margin-left: -2px; }
.tool { width: 44px; height: 46px; color: #555; position: relative; }
.tool.small { font-size: 20px; }
.tool.large { font-size: 28px; }
.tool.aa { width: 40px; }
.tool.pressed { background: #c6c6c6; }
.drop { width: 24px; height: 46px; }
.drop.narrow { width: 20px; }
.sep { width: 12px; height: 42px; background: linear-gradient(#d0d0d0, #d0d0d0) center / 2px 100% no-repeat; }
.sup-mark { position: absolute; right: 4px; top: 6px; }
.phonetic { flex-direction: column; }
.phonetic span { font-size: 14px; line-height: 14px; }
.phonetic b { font-size: 18px; line-height: 18px; font-weight: 400; color: #3e7dbb; }
.boxed { width: 32px; height: 32px; border: 2px solid #3e7dbb; background: #fff; line-height: 28px; }
.bold { font-weight: 700; }
.italic { font-family: "Liberation Serif", serif; font-style: italic; font-weight: 700; font-size: 32px; }
.underline { text-decoration: underline; text-underline-offset: 4px; text-decoration-thickness: 2px; }
.strike { font-size: 20px; text-decoration: line-through; }
.script sub, .script sup { font-size: 14px; line-height: 14px; color: #3e7dbb; }
.script sub { align-self: flex-end; padding-bottom: 6px; }
.script sup { align-self: flex-start; padding-top: 4px; }
.script { font-weight: 600; }
.effect { color: #fff; -webkit-text-stroke: 1px #3e7dbb; }
.mark { align-items: flex-start; border: 0; font-size: 20px; line-height: 28px; }
.mark::after, .color::after { content: ""; position: absolute; left: 6px; right: 6px; top: 31px; height: 8px; background: #ff0; }
.mark svg { margin-left: -4px; margin-top: 6px; }
.color { padding-bottom: 6px; }
.color::after { background: #f00; }
.shaded { width: 28px; line-height: 28px; background: #c0c0c0; }
.circled { width: 28px; height: 28px; border: 2px solid #777; border-radius: 50%; font-size: 18px; line-height: 22px; }

.styles { flex: 1; min-width: 0; padding-top: 12px; padding-left: 19px; padding-right: 21px; }
.gallery { display: flex; height: 120px; background: #fff; border: 2px solid #d2d2d2; border-right: 0; }
.gallery-items { display: flex; flex: 1; align-items: center; overflow: hidden; }
.style { width: 144px; height: 112px; border: 8px solid transparent; padding: 0 3px; flex-direction: column; align-items: stretch; color: #000; overflow: hidden; justify-content: flex-start; }
.style.chosen { border-color: #c6c6c6; }
.preview { display: flex; align-items: center; height: 60px; overflow: hidden; font-family: "Noto Sans CJK SC", sans-serif; font-size: 27px; font-weight: 300; text-align: left; }
.preview.h1 { font-family: "Noto Sans", sans-serif; font-size: 54px; font-weight: 700; padding-bottom: 4px; }
.preview.h2 { font-size: 42px; }
.preview.strong { font-family: Lato, sans-serif; font-weight: 700; }
.preview.em { font-style: italic; color: #404040; }
.name { color: #5f5f5f; margin: 2px -6px 0; }
.name small { font-size: 18px; }
.gallery-nav { display: flex; flex-direction: column; width: 34px; margin: -2px 0; gap: 2px; }
.gallery-nav button { border: 2px solid #b0b0b0; flex: 1; background: #f3f3f3; }
.gallery-nav .off { border-color: #d2d2d2; }
.styles .group-foot { margin-right: -19px; }
.styles .group-foot span { padding-right: 28px; }
.editing { width: 163px; padding-top: 6px; padding-left: 25px; }
.editing .caret.far { margin-left: 12px; }
.editing .group-foot span { padding-right: 20px; }
.collapse { width: 73px; align-items: flex-end; padding-bottom: 7px; padding-left: 18px; }

/* workspace */
.workspace { flex: 1; display: flex; min-height: 700px; }
.nav-pane { width: 700px; border-right: 2px solid #c6c6c6; padding: 0 28px 0 20px; color: #444; }
.pane-head { display: flex; align-items: center; height: 80px; }
.pane-head h2 { font-size: 43px; line-height: 60px; flex: 1; color: #1c477f; }
.pane-menu { width: 40px; }
.pane-close { width: 16px; margin-left: 54px; margin-right: 2px; }
.search { margin-top: 21px; height: 48px; border: 2px solid #ababab; background: #fff; display: flex; align-items: center; padding: 0 7px 0 4px; }
.search input { flex: 1; min-width: 0; }
.search input::placeholder, .task-search input::placeholder { color: inherit; opacity: 1; }
.search .caret { margin-left: 14px; }
.pane-tabs { display: flex; margin: 30px 0 46px; gap: 46px; }
.pane-tabs button { height: 55px; width: 50px; align-items: flex-start; padding-top: 2px; border-bottom: 6px solid transparent; }
.pane-tabs .on { color: #2b579a; font-weight: 700; border-bottom-color: #2b579a; }
.nav-pane p { line-height: 31px; margin-bottom: 30px; }

.left-rule { width: 42px; display: flex; flex-direction: column; padding-left: 4px; }
.tab-stop { width: 40px; height: 41px; border: 3px solid #d8d8d8; background: #fff; margin: 2px 0 38px -1px; }
.v-ruler { flex: 1; width: 36px; display: flex; flex-direction: column; padding: 5px 0 9px; background: linear-gradient(#c6c6c6 194px, #fff 194px); font: 12px/14px "Liberation Sans", sans-serif; color: #333; }
.v-cell { flex: 1; display: flex; flex-direction: column; align-items: center; }
.v-cell span { flex: 1; writing-mode: vertical-rl; transform: rotate(180deg); text-align: center; }
.v-cell::after { content: ""; width: 12px; height: 1px; background: #444; }
.canvas { flex: 1; min-width: 0; display: flex; flex-direction: column; align-items: center; padding: 5px 30px 0 0; overflow: hidden; }
.h-ruler { width: 1588px; height: 34px; flex: none; position: relative; display: flex; align-items: center; padding-left: 2px; background: linear-gradient(90deg, #c6c6c6 240px, #fff 240px, #fff 1346px, #c6c6c6 1346px); font: 12px/12px "Liberation Sans", sans-serif; color: #333; }
.h-cell { width: 28px; flex: none; height: 12px; text-align: center; border-left: 1px solid #444; }
.marker { position: absolute; }
.marker.first { left: 231px; top: -4px; }
.marker.right { left: 1337px; top: 21px; }
.page { width: 1588px; flex: 1; margin-top: 43px; padding: 143px 239px 0; background: #fff; border: 1px solid #c0c0c0; border-bottom: 0; color: #000; font-family: "Noto Sans CJK SC", sans-serif; font-size: 26px; font-weight: 300; }
.page p { line-height: 41px; white-space: nowrap; }
.crops { display: flex; justify-content: space-between; margin: 0 -48px -2px; height: 48px; }
.crops i { width: 48px; border-bottom: 1px solid #aaa; }
.crop-l { border-right: 1px solid #aaa; }
.crop-r { border-left: 1px solid #aaa; }
.grammar { text-decoration: underline wavy #3a6fc4 1px; text-underline-offset: 4px; }
.ret { color: #888; font-size: 26px; line-height: 26px; font-family: "DejaVu Sans", sans-serif; }

/* status bar */
.status { height: 44px; display: flex; align-items: center; background: #f3f3f3; border-top: 2px solid #c6c6c6; padding: 0 15px 2px 14px; white-space: nowrap; }
.st-count { margin-left: 42px; }
.st-book { margin: 0 34px 0 38px; }
.views { margin-left: auto; margin-bottom: -2px; display: flex; align-self: stretch; }
.views button { width: 80px; }
.views .on { background: #c6c6c6; }
.zoom-btn { width: 16px; }
.views + .zoom-btn { margin-left: 12px; }
.zoom { appearance: none; width: 198px; height: 22px; margin: 0 11px 0 12px; background: linear-gradient(#ababab, #ababab) center / 100% 2px no-repeat; }
.zoom::-webkit-slider-thumb { appearance: none; width: 10px; height: 22px; background: #6e6e6e; border: 0; }
.st-zoom { margin-left: 27px; }

/* taskbar */
.taskbar { height: 80px; display: flex; align-items: center; color: #fff; background: linear-gradient(90deg, #1f323e, #27333a 30%, #222d36 50%, #1d2c36 68%, #262f31 78%, #1c2a35); }
.start { width: 97px; height: 80px; }
.task-search { width: 686px; height: 80px; background: #f2f2f2; border-top: 2px solid #c6c6c6; border-bottom: 1px solid #c6c6c6; color: #222; display: flex; align-items: center; padding-left: 22px; gap: 22px; }
.task-search input { flex: 1; font-size: 32px; height: 48px; }
.apps { display: flex; padding-left: 2px; }
.app { width: 98px; height: 80px; }
.app.open { background: linear-gradient(#76b9ed, #76b9ed) center bottom / 80px 4px no-repeat; }
.app.multi { background: linear-gradient(90deg, #76b9ed 62px, #2b3f4b 62px, #2b3f4b 64px, #5585aa 64px) center bottom / 80px 4px no-repeat; }
.app.current { background: #515b60; border-bottom: 4px solid #76b9ed; padding-top: 4px; }
.tile-letter { font: 700 19px "Open Sans", sans-serif; fill: #fff; }
.tile-pdf { font: 600 15px "Open Sans", sans-serif; fill: #fff; }
.tray { margin-left: auto; display: grid; grid-template-columns: repeat(5, 64px) 72px 56px 64px; align-items: center; justify-items: center; }
.tray-lang { font-size: 32px; }
.tray-ime { background: #fff; color: #111; width: 32px; height: 32px; font-size: 29px; text-align: center; }
.clock { width: 130px; margin-left: 12px; text-align: center; line-height: 37px; }
.notify { width: 106px; height: 80px; padding-right: 8px; border-right: 2px solid #6c777d; margin-right: 8px; }

/* floating recorder window */
.recorder { position: absolute; left: 776px; top: 732px; width: 1184px; height: 360px; border-radius: 24px; background: #222; box-shadow: 0 0 16px rgba(0, 0, 0, .4); color: #ddd; }
.rec-head { height: 66px; display: flex; align-items: center; padding: 0 26px 2px 28px; background: #323232; border-bottom: 2px solid #000; border-radius: 24px 24px 0 0; }
.rec-menu { margin-left: 30px; padding-top: 4px; }
.rec-tools { margin-left: auto; display: flex; align-items: center; gap: 27px; }
.rec-min { margin-left: 14px; margin-right: -12px; }
.rec-body { display: flex; padding-top: 72px; height: 294px; }
.rec-time { width: 358px; padding: 7px 52px 0; display: flex; flex-direction: column; align-items: center; color: #aaa; white-space: nowrap; }
.timer { width: 254px; height: 86px; border: 5px solid #1b1b1b; border-radius: 10px; background: #333; color: #fff; text-align: center; font: 700 56px/76px "Liberation Sans", sans-serif; }
.rec-time span { margin-top: 8px; font-size: 25px; }
.rec-sep { width: 4px; height: 140px; background: linear-gradient(90deg, #000 50%, #383838 50%); }
.dial { width: 134px; height: 134px; border: 4px solid #404040; border-radius: 50%; }
.dial.dark { border: 3px solid #1b1b1b; }
.dial.dark svg { margin-left: 12px; }
.dial.cam svg { margin-left: 18px; }
.rec-sources { width: 408px; display: flex; padding-left: 39px; }
.meter { width: 16px; height: 112px; margin: 12px 32px 0 11px; background: repeating-linear-gradient(#222 0 2px, transparent 2px 6px), repeating-linear-gradient(90deg, #454545 0 4px, #222 4px 6px); }
.rec-main { flex: 1; padding: 0 0 0 48px; }
.rec-dials { display: flex; gap: 40px; }
.rec-extra { display: flex; gap: 42px; margin: 28px 0 0 117px; }
.cursor { position: absolute; left: 1102px; top: 20px; }

/* input-method bar */
.ime-bar { position: absolute; right: 0; top: 1440px; width: 302px; height: 44px; display: flex; align-items: center; background: #fff; border-bottom: 2px solid #d8d8d8; color: #000; padding-left: 6px; }
.ime-bar b { font-size: 32px; }
.grip { width: 4px; height: 42px; margin-right: 12px; background: repeating-linear-gradient(#bbb 0 4px, #fff 4px 8px); }
.ime-box { width: 32px; height: 32px; border: 2px solid #777; font-size: 24px; line-height: 26px; text-align: center; margin-right: 12px; }
.ime-bar svg { margin-left: 12px; }
.ime-bar svg + b { margin-left: 12px; }
.ime-bar b:last-of-type + svg { margin-left: 8px; }
.ime-bar .ime-more { margin-left: auto; margin-right: 12px; }
```
FILE: rulers.js
```js
// Fill the rulers: numbers count down to the margin, then up across the text area.
function fill(id, before, after, cls) {
  const box = document.getElementById(id);
  for (let n = -before; n <= after; n++) {
    const cell = document.createElement('div');
    cell.className = cls;
    const label = document.createElement('span');
    label.textContent = n === 0 ? '' : Math.abs(n);
    cell.append(label);
    box.append(cell);
  }
}
fill('h-ruler', 8, 48, 'h-cell');
fill('v-ruler', 4, 26, 'v-cell');
```
